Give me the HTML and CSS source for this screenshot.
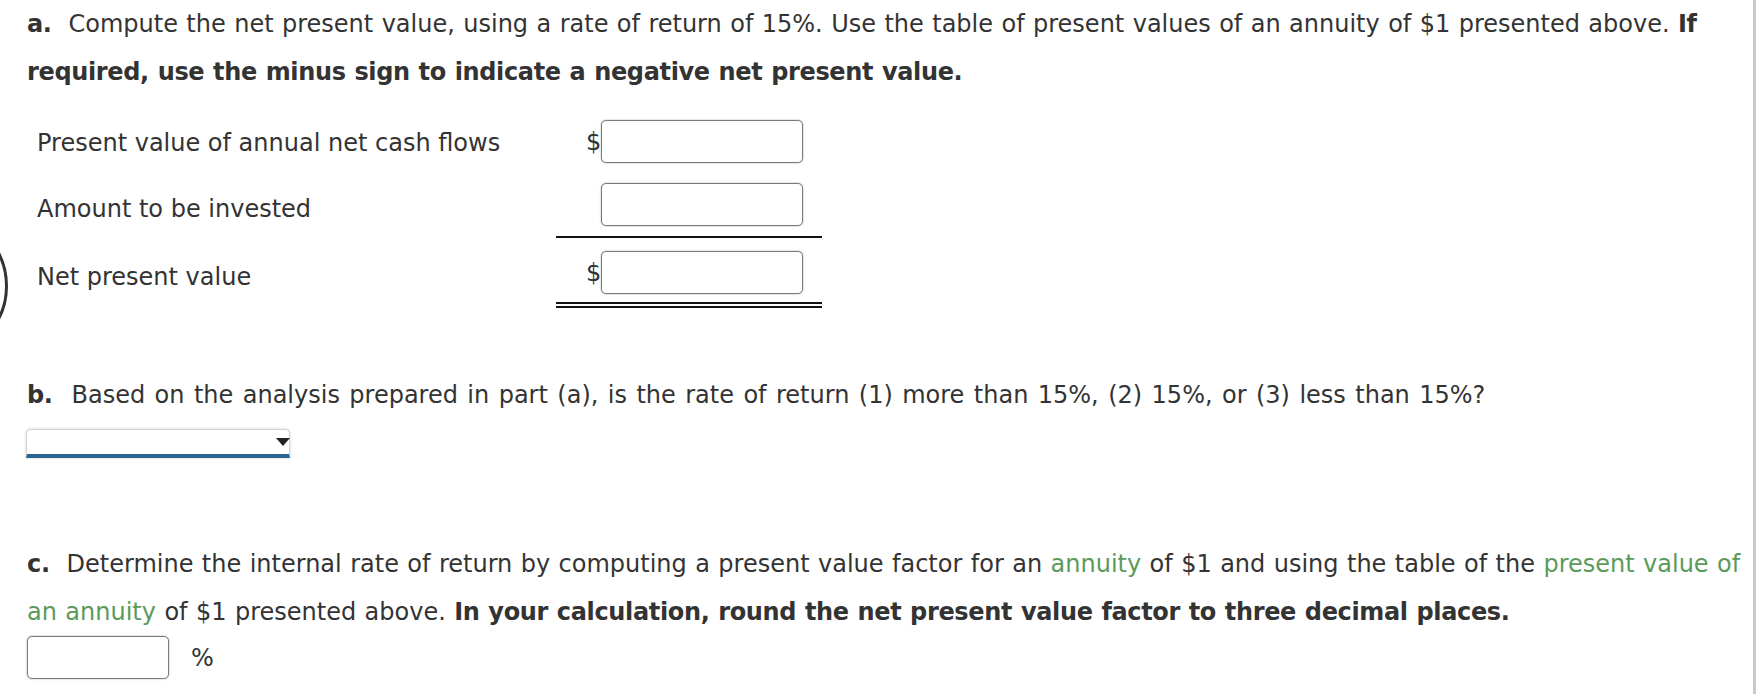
FILE: index.html
```html
<!DOCTYPE html>
<html lang="en">
<head>
<meta charset="utf-8">
<title>Net present value</title>
<link rel="stylesheet" href="styles.css">
</head>
<body>
<div class="page">
  <span class="ring"></span>
  <p class="q"><b>a.</b>&nbsp; Compute the net present value, using a rate of return of 15%. Use the table of present values of an annuity of $1 presented above. <b>If required, use the minus sign to indicate a negative net present value.</b></p>

  <div class="npv">
    <div class="row">
      <div class="label">Present value of annual net cash flows</div>
      <div class="cell"><span class="cur">$</span><input class="box" type="text"></div>
    </div>
    <div class="row sub">
      <div class="label">Amount to be invested</div>
      <div class="cell line"><span class="cur"></span><input class="box" type="text"></div>
    </div>
    <div class="row total">
      <div class="label">Net present value</div>
      <div class="cell dbl"><span class="cur">$</span><input class="box" type="text"></div>
    </div>
  </div>

  <p class="q qb"><b>b.</b>&nbsp; Based on the analysis prepared in part (a), is the rate of return (1) more than 15%, (2) 15%, or (3) less than 15%?</p>
  <div class="select"><span class="arrow"></span></div>

  <p class="q qc"><b>c.</b>&nbsp; Determine the internal rate of return by computing a present value factor for an <span class="link">annuity</span> of $1 and using the table of the <span class="link">present value of an annuity</span> of $1 presented above. <b>In your calculation, round the net present value factor to three decimal places.</b></p>
  <div class="pct"><input class="box small" type="text"><span class="pctsign">%</span></div>
</div>
</body>
</html>
```

FILE: styles.css
```css
html, body {
  margin: 0;
  padding: 0;
  background: #fff;
}
body {
  font-family: "DejaVu Sans", Verdana, sans-serif;
  font-size: 24px;
  color: #333;
  overflow: hidden;
}
.page {
  position: relative;
  width: 1753px;
  height: 694px;
  border-right: 3px solid #c9c9c9;
  overflow: hidden;
}
.ring {
  position: absolute;
  left: -136px;
  top: 214px;
  width: 138px;
  height: 138px;
  border: 3px solid #333;
  border-radius: 50%;
}
.q {
  margin: 0;
  padding-left: 27px;
  padding-right: 0;
  line-height: 48px;
  word-spacing: 0.8px;
}
.q b {
  font-weight: bold;
  letter-spacing: -0.35px;
}
.link {
  color: #5b9a5b;
}
.npv {
  margin: 14px 0 0 27px;
  display: flex;
  flex-direction: column;
}
.row {
  display: flex;
  align-items: stretch;
}
.label {
  width: 519px;
  padding-left: 10px;
  display: flex;
  align-items: center;
  padding-top: 3px;
}
.row.sub .label {
  padding-top: 7px;
}
.row.total .label {
  padding-top: 8px;
}
.cell {
  width: 247px;
  padding-right: 19px;
  display: flex;
  align-items: center;
  justify-content: flex-end;
  padding-top: 10px;
  padding-bottom: 10px;
}
.cell.line {
  border-bottom: 2px solid #111;
}
.row.total .cell {
  padding-top: 13px;
  padding-bottom: 8px;
  border-bottom: 6px double #111;
}
.cur {
  width: 15px;
  text-align: right;
  line-height: 1;
}
.box {
  box-sizing: border-box;
  width: 202px;
  height: 43px;
  margin: 0;
  padding: 0;
  border: 1px solid #7a7a7a;
  border-radius: 5px;
  box-shadow: 0 0 2px rgba(0, 0, 0, 0.35);
  background: #fff;
  outline: none;
}
.qb {
  margin-top: 63px;
  word-spacing: 1.8px;
}
.select {
  position: relative;
  box-sizing: border-box;
  margin: 10px 0 0 26px;
  width: 264px;
  height: 29px;
  border: 1px solid #d4d4d4;
  border-bottom: 4px solid #2b6592;
  border-radius: 5px 5px 0 0;
  box-shadow: 0 0 3px rgba(0, 0, 0, 0.2);
  background: #fff;
}
.arrow {
  position: absolute;
  right: -1px;
  top: 8px;
  width: 0;
  height: 0;
  border-left: 7px solid transparent;
  border-right: 7px solid transparent;
  border-top: 8px solid #222;
}
.qc {
  margin-top: 82px;
}
.pct {
  display: flex;
  align-items: center;
  margin: 0 0 0 27px;
}
.box.small {
  width: 142px;
  height: 43px;
}
.pctsign {
  margin-left: 22px;
  font-size: 24px;
}
```
